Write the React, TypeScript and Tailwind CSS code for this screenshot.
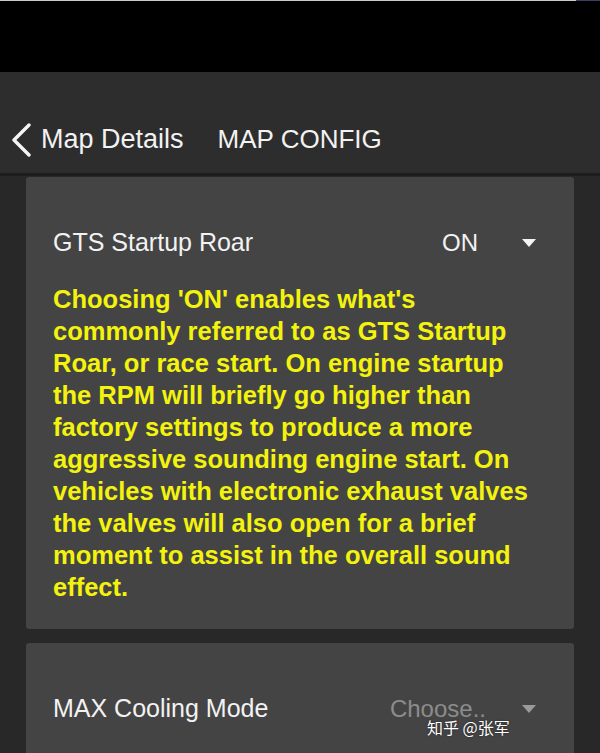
const Caret = ({ color }: { color: string }) => (
  <svg width="14" height="8" viewBox="0 0 14 8" className="shrink-0">
    <path d="M0 0 H14 L7 8 Z" fill={color} />
  </svg>
);

const SettingRow = ({
  label,
  value,
  muted,
}: {
  label: string;
  value: string;
  muted?: boolean;
}) => (
  <div className="flex h-[40px] items-center justify-between">
    <span className="text-[25px] text-[#f2f2f2]">{label}</span>
    <div className="flex items-center">
      <span
        className={
          muted ? "text-[24px] text-[#8c8c8c]" : "text-[24px] text-[#f2f2f2]"
        }
      >
        {value}
      </span>
      <div className={muted ? "ml-[36px]" : "ml-[44px]"}>
        <Caret color={muted ? "#9a9a9a" : "#f4f4f4"} />
      </div>
    </div>
  </div>
);

const App = () => {
  return (
    <div className="relative h-[753px] w-[600px] overflow-hidden bg-[#282828] font-['Liberation_Sans',Arial,sans-serif]">
      {/* status area */}
      <div className="flex h-[72px] flex-col bg-black">
        <div className="flex h-px w-full">
          <div className="flex-1 bg-[#c9c9c9]" />
          <div className="w-[24px] bg-[#3a3f63]" />
        </div>
      </div>

      {/* nav header */}
      <div className="flex h-[101px] items-center gap-[34px] bg-[#2d2d2d] pt-[34px] pl-[11px]">
        <div className="flex items-center gap-[9px]">
          <svg width="21" height="34" viewBox="0 0 21 34">
            <path
              d="M18 2 L3 17 L18 32"
              fill="none"
              stroke="#f4f4f4"
              strokeWidth="3.4"
              strokeLinecap="round"
              strokeLinejoin="round"
            />
          </svg>
          <span className="text-[27px] text-[#f2f2f2]">Map Details</span>
        </div>
        <span className="text-[26px] text-[#f2f2f2]">MAP CONFIG</span>
      </div>
      <div className="h-[3px] bg-[#1d1d1d]" />

      {/* settings list */}
      <div className="flex flex-col gap-[14px] px-[26px] pt-px">
        <div className="rounded-[3px] bg-[#444444] pt-[46px] pr-[38px] pb-[26px] pl-[27px]">
          <SettingRow label="GTS Startup Roar" value="ON" />
          <p className="mt-[20px] text-[25.5px] leading-[32px] font-bold text-[#f3f30e]">
            Choosing 'ON' enables what's
            <br />
            commonly referred to as GTS Startup
            <br />
            Roar, or race start. On engine startup
            <br />
            the RPM will briefly go higher than
            <br />
            factory settings to produce a more
            <br />
            aggressive sounding engine start. On
            <br />
            vehicles with electronic exhaust valves
            <br />
            the valves will also open for a brief
            <br />
            moment to assist in the overall sound
            <br />
            effect.
          </p>
        </div>
        <div className="h-[200px] rounded-[3px] bg-[#444444] pt-[46px] pr-[38px] pl-[27px]">
          <SettingRow label="MAX Cooling Mode" value="Choose.." muted />
        </div>
      </div>

      {/* watermark */}
      <span className="absolute top-[715px] left-[427px] font-['Noto_Sans_CJK_SC',sans-serif] text-[16px] text-white [text-shadow:0_0_2px_rgba(0,0,0,0.6)]">
        知乎 @张军
      </span>
    </div>
  );
};

export default App;
